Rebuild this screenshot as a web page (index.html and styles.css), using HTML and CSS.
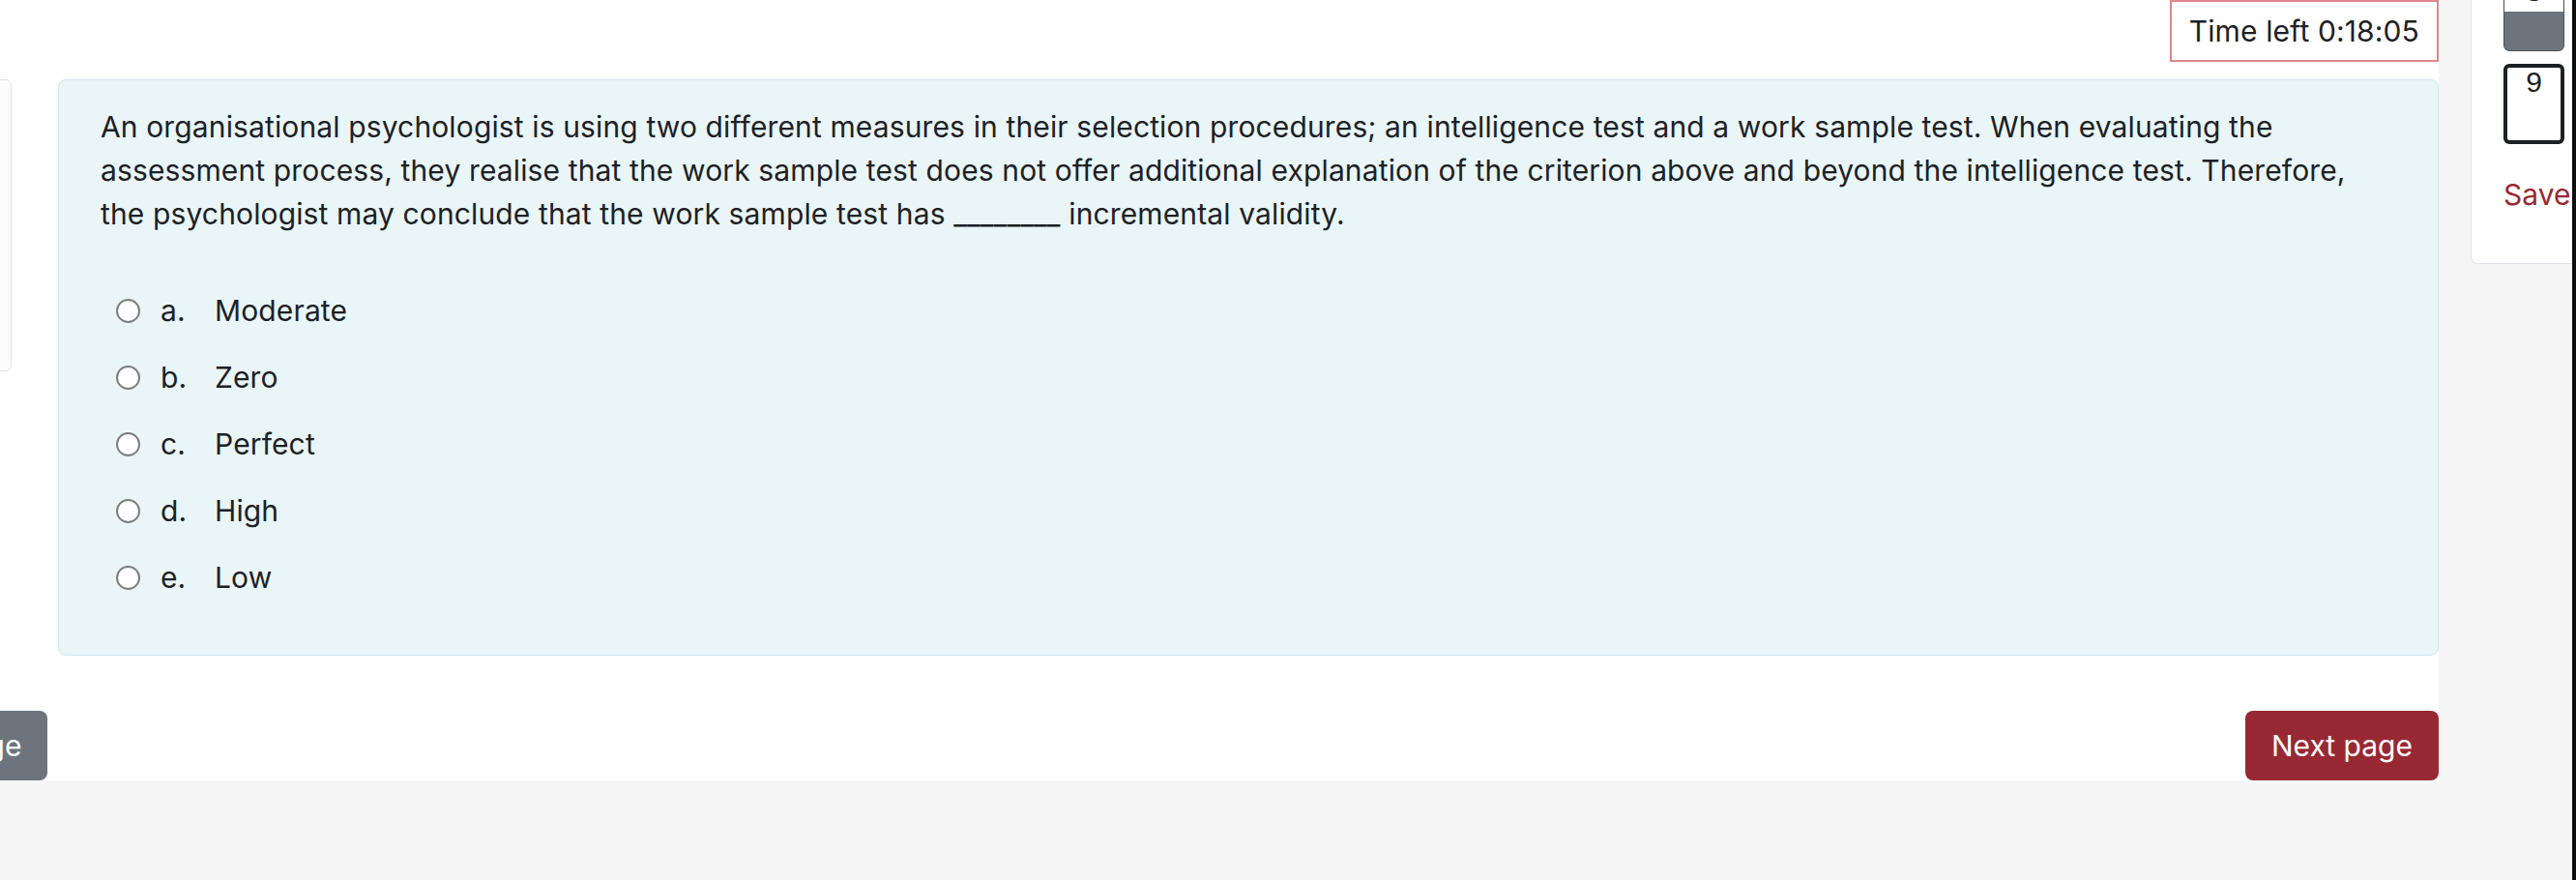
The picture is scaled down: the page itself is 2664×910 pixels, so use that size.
FILE: index.html
```html
<!DOCTYPE html>
<html lang="en">
<head>
<meta charset="utf-8">
<title>Quiz attempt</title>
<link rel="stylesheet" href="styles.css">
</head>
<body>
<div class="page">
  <main class="main">
    <div class="timer-row">
      <div class="timer">Time left 0:18:05</div>
    </div>
    <div class="q-row">
      <aside class="info"></aside>
      <section class="qcard">
        <p class="qtext">An organisational psychologist is using two different measures in their selection procedures; an intelligence test and a work sample test. When evaluating the assessment process, they realise that the work sample test does not offer additional explanation of the criterion above and beyond the intelligence test. Therefore, the psychologist may conclude that the work sample test has ________ incremental validity.</p>
        <div class="answers">
          <label class="opt"><span class="radio"></span><span class="letter">a.</span><span class="label">Moderate</span></label>
          <label class="opt"><span class="radio"></span><span class="letter">b.</span><span class="label">Zero</span></label>
          <label class="opt"><span class="radio"></span><span class="letter">c.</span><span class="label">Perfect</span></label>
          <label class="opt"><span class="radio"></span><span class="letter">d.</span><span class="label">High</span></label>
          <label class="opt"><span class="radio"></span><span class="letter">e.</span><span class="label">Low</span></label>
        </div>
      </section>
    </div>
    <div class="btn-row">
      <button class="btn btn-prev">Previous page</button>
      <button class="btn btn-next">Next page</button>
    </div>
  </main>
  <aside class="drawer">
    <div class="drawer-panel">
      <div class="qnav">
        <div class="qbtn answered"><span class="qnum">8</span></div>
        <div class="qbtn current"><span class="qnum">9</span></div>
      </div>
      <a class="save">Save</a>
    </div>
  </aside>
  <div class="edge"></div>
</div>
</body>
</html>
```

FILE: styles.css
```css
html, body {
  margin: 0;
  padding: 0;
}
body {
  font-family: Inter, "Liberation Sans", sans-serif;
  color: #1d2125;
  background: #f5f5f5;
  overflow: hidden;
}
.page {
  display: flex;
  align-items: flex-start;
  height: 910px;
  background: #f5f5f5;
}
.main {
  width: 2522px;
  height: 807px;
  flex: none;
  background: #fff;
  display: flex;
  flex-direction: column;
}
.timer-row {
  display: flex;
  justify-content: flex-end;
  height: 82px;
}
.timer {
  box-sizing: border-box;
  height: 64px;
  border: 2px solid #e0868c;
  padding: 0 18px;
  font-size: 30px;
  line-height: 60px;
  letter-spacing: 0.13px;
  white-space: nowrap;
}
.q-row {
  display: flex;
  align-items: flex-start;
  gap: 48px;
}
.info {
  box-sizing: border-box;
  width: 112px;
  height: 302px;
  margin-left: -100px;
  border: 1px solid #dfe2e6;
  border-radius: 6px;
  background: #fbfbfc;
}
.qcard {
  flex: 1;
  box-sizing: border-box;
  height: 596px;
  border: 1px solid #cfe7ee;
  border-radius: 8px;
  background: #e9f5f7;
  padding: 26px 60px 0 43px;
}
.qtext {
  margin: 0;
  font-size: 30px;
  line-height: 45px;
  letter-spacing: 0.13px;
}
.answers {
  margin-top: 43px;
  display: flex;
  flex-direction: column;
}
.opt {
  display: flex;
  align-items: center;
  height: 69px;
  font-size: 30px;
  line-height: 45px;
  letter-spacing: 0.13px;
}
.radio {
  box-sizing: border-box;
  width: 25px;
  height: 25px;
  margin-left: 16px;
  margin-right: 21px;
  border: 2px solid #7d7d7d;
  border-radius: 50%;
  background: #fff;
  flex: none;
}
.letter {
  width: 56px;
  flex: none;
}
.btn-row {
  margin-top: auto;
  display: flex;
  justify-content: space-between;
}
.btn {
  font-family: Inter, "Liberation Sans", sans-serif;
  font-size: 30px;
  line-height: 45px;
  padding: 13.5px 27px;
  border: none;
  border-radius: 8px;
  color: #fff;
  white-space: nowrap;
}
.btn-prev {
  background: #6c757d;
  margin-left: -207px;
}
.btn-next {
  background: #982834;
}
.drawer {
  flex: 1;
  padding-left: 33px;
}
.drawer-panel {
  box-sizing: border-box;
  height: 273px;
  background: #fff;
  border-left: 1px solid #dfe2e6;
  border-bottom: 1px solid #dfe2e6;
  border-bottom-left-radius: 8px;
  padding-left: 33px;
  overflow: hidden;
}
.qnav {
  display: flex;
  flex-direction: column;
  gap: 13px;
}
.qbtn {
  box-sizing: border-box;
  width: 63px;
  height: 83px;
  border-radius: 6px;
  background: #fff;
  text-align: center;
  font-family: "Liberation Sans", sans-serif;
  font-size: 30px;
  line-height: 30px;
  color: #1d2125;
}
.qbtn.answered {
  height: 81px;
  margin-top: -28px;
  border: 1px solid #495057;
  padding-top: 3px;
  background: linear-gradient(to bottom, #fff 39px, #6c757d 39px);
}
.qbtn.current {
  border: 4px solid #1d2125;
}
.save {
  display: block;
  margin-top: 30px;
  font-size: 30px;
  line-height: 45px;
  color: #9a2833;
  white-space: nowrap;
}
.edge {
  width: 4px;
  height: 910px;
  flex: none;
  background: #0e0f0d;
}
```
